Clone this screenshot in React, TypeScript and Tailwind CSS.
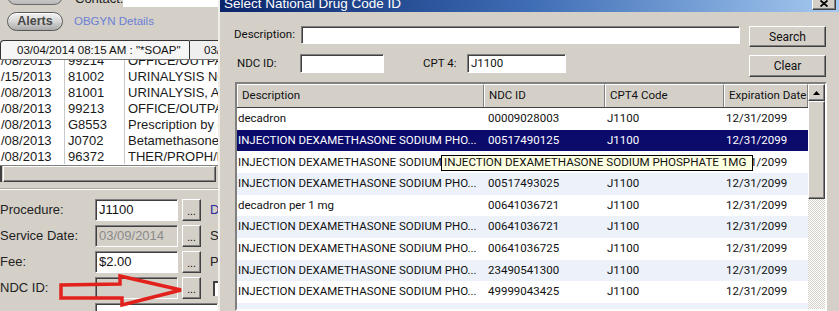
import React from "react";

const narrow = "[font-family:Roboto,'Liberation_Sans',Arial,sans-serif]";
const sans = "[font-family:'Liberation_Sans',Arial,sans-serif]";

// classic win2k bevels
const raised =
  "bg-[#d4d0c8] border border-t-white border-l-white border-r-[#404040] border-b-[#404040] shadow-[inset_-1px_-1px_0_#808080]";
const sunken =
  "border border-t-[#808080] border-l-[#808080] border-r-white border-b-white shadow-[inset_1px_1px_0_#404040]";

const leftRows = [
  ["/08/2013", "99214", "OFFICE/OUTPATIENT"],
  ["/15/2013", "81002", "URINALYSIS NONAUTO W/O SCOPE"],
  ["/08/2013", "81001", "URINALYSIS, AUTO W/SCOPE"],
  ["/08/2013", "99213", "OFFICE/OUTPATIENT VISIT EST"],
  ["/08/2013", "G8553", "Prescription by e-prescribing"],
  ["/08/2013", "J0702", "Betamethasone acet&sod phosp"],
  ["/08/2013", "96372", "THER/PROPH/DIAG INJ SC/IM"],
];

const inj = "INJECTION DEXAMETHASONE SODIUM PHO...";

const ndcRows = [
  ["decadron", "00009028003", "J1100", "12/31/2099"],
  [inj, "00517490125", "J1100", "12/31/2099"],
  [inj, "00517490225", "J1100", "12/31/2099"],
  [inj, "00517493025", "J1100", "12/31/2099"],
  ["decadron per 1 mg", "00641036721", "J1100", "12/31/2099"],
  [inj, "00641036721", "J1100", "12/31/2099"],
  [inj, "00641036725", "J1100", "12/31/2099"],
  [inj, "23490541300", "J1100", "12/31/2099"],
  [inj, "49999043425", "J1100", "12/31/2099"],
  ["", "", "", ""],
];

function DotsButton() {
  return (
    <div className={`${raised} ml-[4px] flex h-[22px] w-[19px] shrink-0 items-end justify-center pb-[3px] text-[10px] leading-none`}>
      ...
    </div>
  );
}

function FormRow({
  label,
  value,
  disabled,
  trail,
}: {
  label: string;
  value?: string;
  disabled?: boolean;
  trail: React.ReactNode;
}) {
  return (
    <div className="mb-[4px] flex h-[22px] shrink-0 items-center">
      <div className="w-[95px] shrink-0 text-[13px] text-[#222]">{label}</div>
      <div
        className={`${sunken} flex h-[22px] w-[83px] shrink-0 items-center pl-[3px] text-[13px] ${
          disabled ? "bg-[#d4d0c8] text-[#8a8a8a]" : "bg-white text-[#111]"
        }`}
      >
        {value}
      </div>
      <DotsButton />
      {trail}
    </div>
  );
}

function LeftPanel() {
  return (
    <div className={`${sans} flex w-[218px] shrink-0 flex-col overflow-hidden`}>
      {/* cut-off contact row */}
      <div className="flex h-[8px] shrink-0 items-end overflow-hidden">
        <div className="mb-[3px] ml-[7px] h-[18px] w-[56px] shrink-0 rounded-[9px] border border-[#6b6b6b] bg-gradient-to-b from-[#eeeeee] to-[#b9b9b9]" />
        <span className="mb-[3px] ml-[12px] text-[13px] leading-none text-[#222]">Contact:</span>
        <div className="mb-[1px] ml-auto h-[20px] w-[101px] bg-white" />
      </div>

      {/* alerts */}
      <div className="mt-[4px] flex h-[19px] shrink-0 items-center">
        <div className="ml-[7px] flex h-[19px] w-[56px] items-center justify-center rounded-full border border-[#5a5a5a] bg-gradient-to-b from-[#f2f2f2] via-[#d6d6d6] to-[#a9a9a9] text-[12.5px] font-bold text-[#484848] shadow-[inset_0_1px_0_#fff]">
          Alerts
        </div>
        <span className="ml-[11px] text-[11.5px] text-[#6b7fd6]">OBGYN Details</span>
      </div>

      {/* tabs */}
      <div className="mt-[9px] flex h-[20px] shrink-0 border-b border-[#7a7a7a]">
        <div className="flex w-[190px] shrink-0 items-center whitespace-nowrap rounded-tl-[4px] rounded-tr-[2px] border-l border-r border-t border-[#333] bg-[#f6f6f6] pl-[16px] pt-[2px] text-[11.5px] text-[#111]">
          03/04/2014 08:15 AM : "*SOAP"
        </div>
        <div className="flex flex-1 items-center overflow-hidden border-t border-[#333] bg-[#efefef] pl-[14px] pt-[2px] text-[11.5px] text-[#111]">
          03/05
        </div>
      </div>

      {/* visit grid */}
      <div className="h-[105px] shrink-0 overflow-hidden bg-white">
        <div className="mt-[-8px]">
          {leftRows.map((r, i) => (
            <div key={i} className="flex h-[16px] items-center text-[13px] leading-none text-[#1a1a1a]">
              <div className="flex h-full w-[65px] shrink-0 items-center border-r border-[#c8c8c8] pl-[1px]">{r[0]}</div>
              <div className="flex h-full w-[60px] shrink-0 items-center border-r border-[#c8c8c8] pl-[3px]">{r[1]}</div>
              <div className="flex h-full flex-1 items-center overflow-hidden whitespace-nowrap pl-[3px]">{r[2]}</div>
            </div>
          ))}
        </div>
      </div>

      {/* horizontal scrollbar */}
      <div className="flex h-[17px] shrink-0 border-t border-[#808080] bg-[#d4d0c8]">
        <div className="w-[2px] bg-[#404040]" />
        <div className={`${raised} ml-[1px] mr-[2px] flex-1`} />
      </div>

      <div className="mt-[6px] h-[2px] shrink-0 border-t border-[#a8a59f] border-b border-b-white" />

      {/* procedure form */}
      <div className="mt-[9px] flex flex-col">
        <FormRow
          label="Procedure:"
          value="J1100"
          trail={<span className="ml-[9px] text-[13px] text-[#2b2b9c]">Date:</span>}
        />
        <FormRow
          label="Service Date:"
          value="03/09/2014"
          disabled
          trail={<span className="ml-[9px] text-[13px] text-[#222]">Status:</span>}
        />
        <FormRow
          label="Fee:"
          value="$2.00"
          trail={<span className="ml-[9px] text-[13px] text-[#222]">Paid:</span>}
        />
        <FormRow
          label="NDC ID:"
          disabled
          trail={<div className="ml-[12px] h-[15px] w-[12px] shrink-0 border-l-2 border-t-2 border-[#404040] bg-white" />}
        />
        <div className="flex h-[22px] shrink-0 items-start">
          <div className="w-[95px] shrink-0 pt-[4px] text-[13px] text-[#222]">Location:</div>
          <div className={`${sunken} h-[22px] w-[123px] shrink-0 bg-white`} />
        </div>
      </div>
    </div>
  );
}

function Dialog() {
  return (
    <div className={`${narrow} flex min-w-0 flex-1 flex-col border-l-2 border-[#efeee9] bg-[#d4d0c8]`}>
      {/* title bar, top is off screen */}
      <div className="flex h-[12px] shrink-0 justify-between overflow-hidden bg-gradient-to-r from-[#0a246a] via-[#3f6db5] to-[#a6caf0]">
        <div className={`${sans} ml-[4px] mt-[-3.5px] text-[13.5px] leading-none text-white`}>
          Select National Drug Code ID
        </div>
        <div className={`${raised} mr-[3px] mt-[-4px] flex h-[14px] w-[24px] items-center justify-center`}>
          <svg width="8" height="7" viewBox="0 0 8 7">
            <path d="M0.5 0.5 L7.5 6.5 M7.5 0.5 L0.5 6.5" stroke="#000" strokeWidth="1.8" />
          </svg>
        </div>
      </div>

      <div className="flex min-h-0 flex-1 flex-col pl-[14px] pt-[14px]">
        {/* description */}
        <div className="flex h-[21px] shrink-0 items-start">
          <div className="flex h-[18px] w-[67px] shrink-0 items-center text-[11.5px] text-[#111]">Description:</div>
          <div className={`${sunken} h-[18px] w-[439px] shrink-0 bg-white`} />
          <div className={`${raised} ml-[9px] flex h-[21px] w-[77px] shrink-0 items-center justify-center text-[12px] text-[#111]`}>
            Search
          </div>
        </div>

        {/* ndc / cpt */}
        <div className="mt-[7px] flex h-[23px] shrink-0 items-start">
          <div className="flex h-[19px] w-[66px] shrink-0 items-center pl-[3px] text-[11.5px] text-[#111]">NDC ID:</div>
          <div className={`${sunken} h-[19px] w-[84px] shrink-0 bg-white`} />
          <div className="ml-[39px] flex h-[19px] w-[44px] shrink-0 items-center text-[11.5px] text-[#111]">CPT 4:</div>
          <div className={`${sunken} flex h-[19px] w-[99px] shrink-0 items-center bg-white pl-[3px] text-[11.5px] text-[#111]`}>
            J1100
          </div>
          <div className={`${raised} ml-[183px] mt-[1px] flex h-[22px] w-[77px] shrink-0 items-center justify-center text-[12px] text-[#111]`}>
            Clear
          </div>
        </div>

        {/* results grid */}
        <div className="ml-[1px] mt-[5px] flex min-h-0 w-[592px] flex-1 overflow-hidden border-2 border-t-[#808080] border-l-[#808080] border-r-white border-b-white bg-white shadow-[inset_1px_1px_0_#404040]">
          <div className="flex w-[571px] shrink-0 flex-col">
            <div className="flex h-[24px] shrink-0 border-b border-[#404040] bg-[#d4d0c8] text-[11.5px] text-[#111]">
              {[
                ["Description", "w-[247px]"],
                ["NDC ID", "w-[121px]"],
                ["CPT4 Code", "w-[119px]"],
                ["Expiration Date", "w-[84px]"],
              ].map(([t, w]) => (
                <div
                  key={t}
                  className={`${w} flex shrink-0 items-center overflow-hidden whitespace-nowrap border-l border-t border-l-white border-t-white border-r border-r-[#808080] pl-[4px]`}
                >
                  {t}
                </div>
              ))}
            </div>
            {ndcRows.map((r, i) => {
              const sel = i === 1;
              const bg = sel ? "bg-[#0b0b6c] text-white" : i % 2 === 0 ? "bg-white text-[#111]" : "bg-[#ecf1fa] text-[#111]";
              return (
                <div key={i} className={`flex h-[21.67px] shrink-0 items-center text-[11.5px] ${bg}`}>
                  <div className="w-[247px] shrink-0 overflow-hidden whitespace-nowrap pl-[1px]">{r[0]}</div>
                  <div className="w-[121px] shrink-0 pl-[4px]">{r[1]}</div>
                  <div className="w-[119px] shrink-0 pl-[2px]">{r[2]}</div>
                  <div className="w-[84px] shrink-0 pl-[2px]">{r[3]}</div>
                </div>
              );
            })}
          </div>

          {/* vertical scrollbar */}
          <div className="flex w-[17px] shrink-0 flex-col">
            <div className={`${raised} flex h-[17px] shrink-0 items-center justify-center`}>
              <svg width="7" height="4" viewBox="0 0 7 4">
                <path d="M3.5 0 L7 4 L0 4 Z" fill="#000" />
              </svg>
            </div>
            <div className={`${raised} h-[98px] shrink-0`} />
            <div className="flex-1 bg-[image:repeating-conic-gradient(#d4d0c8_0_25%,#ffffff_0_50%)] bg-[length:2px_2px]" />
          </div>
        </div>
      </div>
    </div>
  );
}

export default function App() {
  return (
    <div className="relative flex h-[311px] w-[839px] overflow-hidden bg-[#d4d0c8]">
      <LeftPanel />
      <Dialog />

      {/* hover tooltip */}
      <div
        className={`${narrow} absolute left-[441px] top-[155px] flex h-[16px] w-[312px] items-center whitespace-nowrap border border-black bg-[#ffffe1] pl-[2px] text-[11.6px] leading-none text-[#111]`}
      >
        INJECTION DEXAMETHASONE SODIUM PHOSPHATE 1MG
      </div>

      {/* red annotation arrow */}
      <svg
        className="pointer-events-none absolute left-[56px] top-[272px]"
        width="132"
        height="39"
        viewBox="56 272 132 39"
      >
        <polygon
          points="61,285 120,284 120,276 181,290 122,305 122,298 61,298"
          fill="none"
          stroke="#e3211c"
          strokeWidth="3.5"
          strokeLinejoin="miter"
        />
      </svg>
    </div>
  );
}
